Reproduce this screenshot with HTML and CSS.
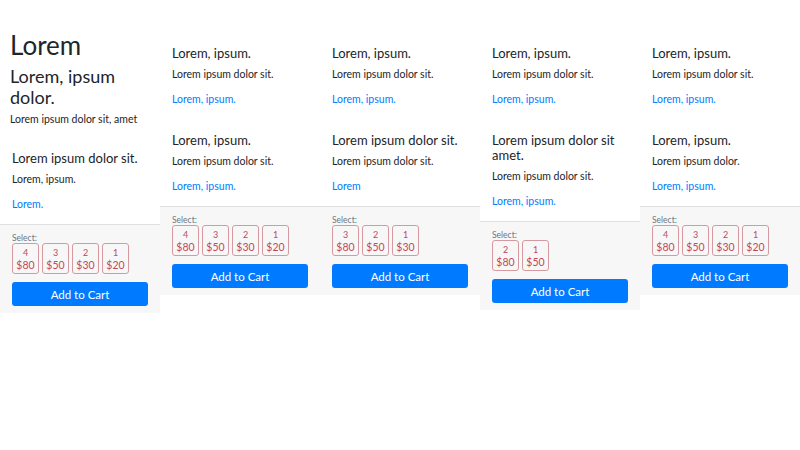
FILE: index.html
```html
<!DOCTYPE html>
<html lang="en">
<head>
    <meta charset="UTF-8">
    <meta name="viewport" content="width=device-width, initial-scale=1.0">
    <title>Shop</title>
    <link rel="stylesheet" href="styles.css">
</head>
<body>
    <div class="row">
        <!-- first column has the intro on top -->
        <div class="col first">
            <div class="intro">
                <h1>Lorem</h1>
                <h2>Lorem, ipsum dolor.</h2>
                <p>Lorem ipsum dolor sit, amet</p>
            </div>
            <div class="card">
                <div class="card-body">
                    <div class="item">
                        <h5>Lorem ipsum dolor sit.</h5>
                        <p>Lorem, ipsum.</p>
                        <a href="#">Lorem.</a>
                    </div>
                </div>
                <div class="card-footer">
                    <div class="label">Select:</div>
                    <div class="options">
                        <div class="option"><span>4</span><span class="price">$80</span></div>
                        <div class="option"><span>3</span><span class="price">$50</span></div>
                        <div class="option"><span>2</span><span class="price">$30</span></div>
                        <div class="option"><span>1</span><span class="price">$20</span></div>
                    </div>
                    <button class="button">Add to Cart</button>
                </div>
            </div>
        </div>

        <div class="col">
            <div class="card">
                <div class="card-body">
                    <div class="item">
                        <h5>Lorem, ipsum.</h5>
                        <p>Lorem ipsum dolor sit.</p>
                        <a href="#">Lorem, ipsum.</a>
                    </div>
                    <div class="item">
                        <h5>Lorem, ipsum.</h5>
                        <p>Lorem ipsum dolor sit.</p>
                        <a href="#">Lorem, ipsum.</a>
                    </div>
                </div>
                <div class="card-footer">
                    <div class="label">Select:</div>
                    <div class="options">
                        <div class="option"><span>4</span><span class="price">$80</span></div>
                        <div class="option"><span>3</span><span class="price">$50</span></div>
                        <div class="option"><span>2</span><span class="price">$30</span></div>
                        <div class="option"><span>1</span><span class="price">$20</span></div>
                    </div>
                    <button class="button">Add to Cart</button>
                </div>
            </div>
        </div>

        <div class="col">
            <div class="card">
                <div class="card-body">
                    <div class="item">
                        <h5>Lorem, ipsum.</h5>
                        <p>Lorem ipsum dolor sit.</p>
                        <a href="#">Lorem, ipsum.</a>
                    </div>
                    <div class="item">
                        <h5>Lorem ipsum dolor sit.</h5>
                        <p>Lorem ipsum dolor sit.</p>
                        <a href="#">Lorem</a>
                    </div>
                </div>
                <div class="card-footer">
                    <div class="label">Select:</div>
                    <div class="options">
                        <div class="option"><span>3</span><span class="price">$80</span></div>
                        <div class="option"><span>2</span><span class="price">$50</span></div>
                        <div class="option"><span>1</span><span class="price">$30</span></div>
                    </div>
                    <button class="button">Add to Cart</button>
                </div>
            </div>
        </div>

        <div class="col">
            <div class="card">
                <div class="card-body">
                    <div class="item">
                        <h5>Lorem, ipsum.</h5>
                        <p>Lorem ipsum dolor sit.</p>
                        <a href="#">Lorem, ipsum.</a>
                    </div>
                    <div class="item">
                        <h5>Lorem ipsum dolor sit amet.</h5>
                        <p>Lorem ipsum dolor sit.</p>
                        <a href="#">Lorem, ipsum.</a>
                    </div>
                </div>
                <div class="card-footer">
                    <div class="label">Select:</div>
                    <div class="options">
                        <div class="option"><span>2</span><span class="price">$80</span></div>
                        <div class="option"><span>1</span><span class="price">$50</span></div>
                    </div>
                    <button class="button">Add to Cart</button>
                </div>
            </div>
        </div>

        <div class="col">
            <div class="card">
                <div class="card-body">
                    <div class="item">
                        <h5>Lorem, ipsum.</h5>
                        <p>Lorem ipsum dolor sit.</p>
                        <a href="#">Lorem, ipsum.</a>
                    </div>
                    <div class="item">
                        <h5>Lorem, ipsum.</h5>
                        <p>Lorem ipsum dolor.</p>
                        <a href="#">Lorem, ipsum.</a>
                    </div>
                </div>
                <div class="card-footer">
                    <div class="label">Select:</div>
                    <div class="options">
                        <div class="option"><span>4</span><span class="price">$80</span></div>
                        <div class="option"><span>3</span><span class="price">$50</span></div>
                        <div class="option"><span>2</span><span class="price">$30</span></div>
                        <div class="option"><span>1</span><span class="price">$20</span></div>
                    </div>
                    <button class="button">Add to Cart</button>
                </div>
            </div>
        </div>
    </div>
</body>
</html>
```

FILE: styles.css
```css
body {
    margin: 0;
    background-color: #fff;
    color: #212529;
    font-family: 'Lato', sans-serif;
}

.row {
    display: flex;
    align-items: flex-start;
}

.col {
    width: 160px;
    flex-shrink: 0;
    padding-top: 46px;
}

.col.first {
    padding-top: 0;
}

.intro {
    padding: 30px 10px 0;
}

.intro h1 {
    font-size: 26px;
    font-weight: 400;
    line-height: 31px;
    margin: 0 0 5px;
}

.intro h2 {
    font-size: 18px;
    font-weight: 400;
    line-height: 21px;
    margin: 0 0 4px;
}

.intro p {
    font-size: 10.5px;
    line-height: 15px;
    margin: 0 0 24px;
}

.card-body {
    padding: 0 12px 12px;
    display: flex;
    flex-direction: column;
    gap: 26px;
}

.item h5 {
    font-size: 13px;
    font-weight: 400;
    line-height: 15px;
    margin: 0 0 6px;
}

.item p {
    font-size: 10.5px;
    line-height: 15px;
    margin: 0 0 10px;
}

.item a {
    display: block;
    font-size: 10.5px;
    line-height: 15px;
    color: #007bff;
    text-decoration: none;
}

.card-footer {
    background-color: #f7f7f7;
    border-top: 1px solid #dfdfdf;
    padding: 8px 12px 7px;
}

.label {
    font-size: 8.5px;
    line-height: 10px;
    color: #6c757d;
}

.options {
    display: flex;
    gap: 3px;
}

.option {
    width: 27px;
    height: 31px;
    box-sizing: border-box;
    border: 1px solid #d49aa0;
    border-radius: 3px;
    color: #c4475a;
    display: flex;
    flex-direction: column;
    align-items: center;
    justify-content: center;
    font-size: 9px;
    line-height: 13px;
}

.option .price {
    font-size: 10.5px;
}

.button {
    display: block;
    width: 100%;
    margin-top: 8px;
    height: 24px;
    padding: 0;
    border: none;
    border-radius: 3px;
    background-color: #007bff;
    color: white;
    font-family: 'Lato', sans-serif;
    font-size: 11.5px;
    cursor: pointer;
}
```
